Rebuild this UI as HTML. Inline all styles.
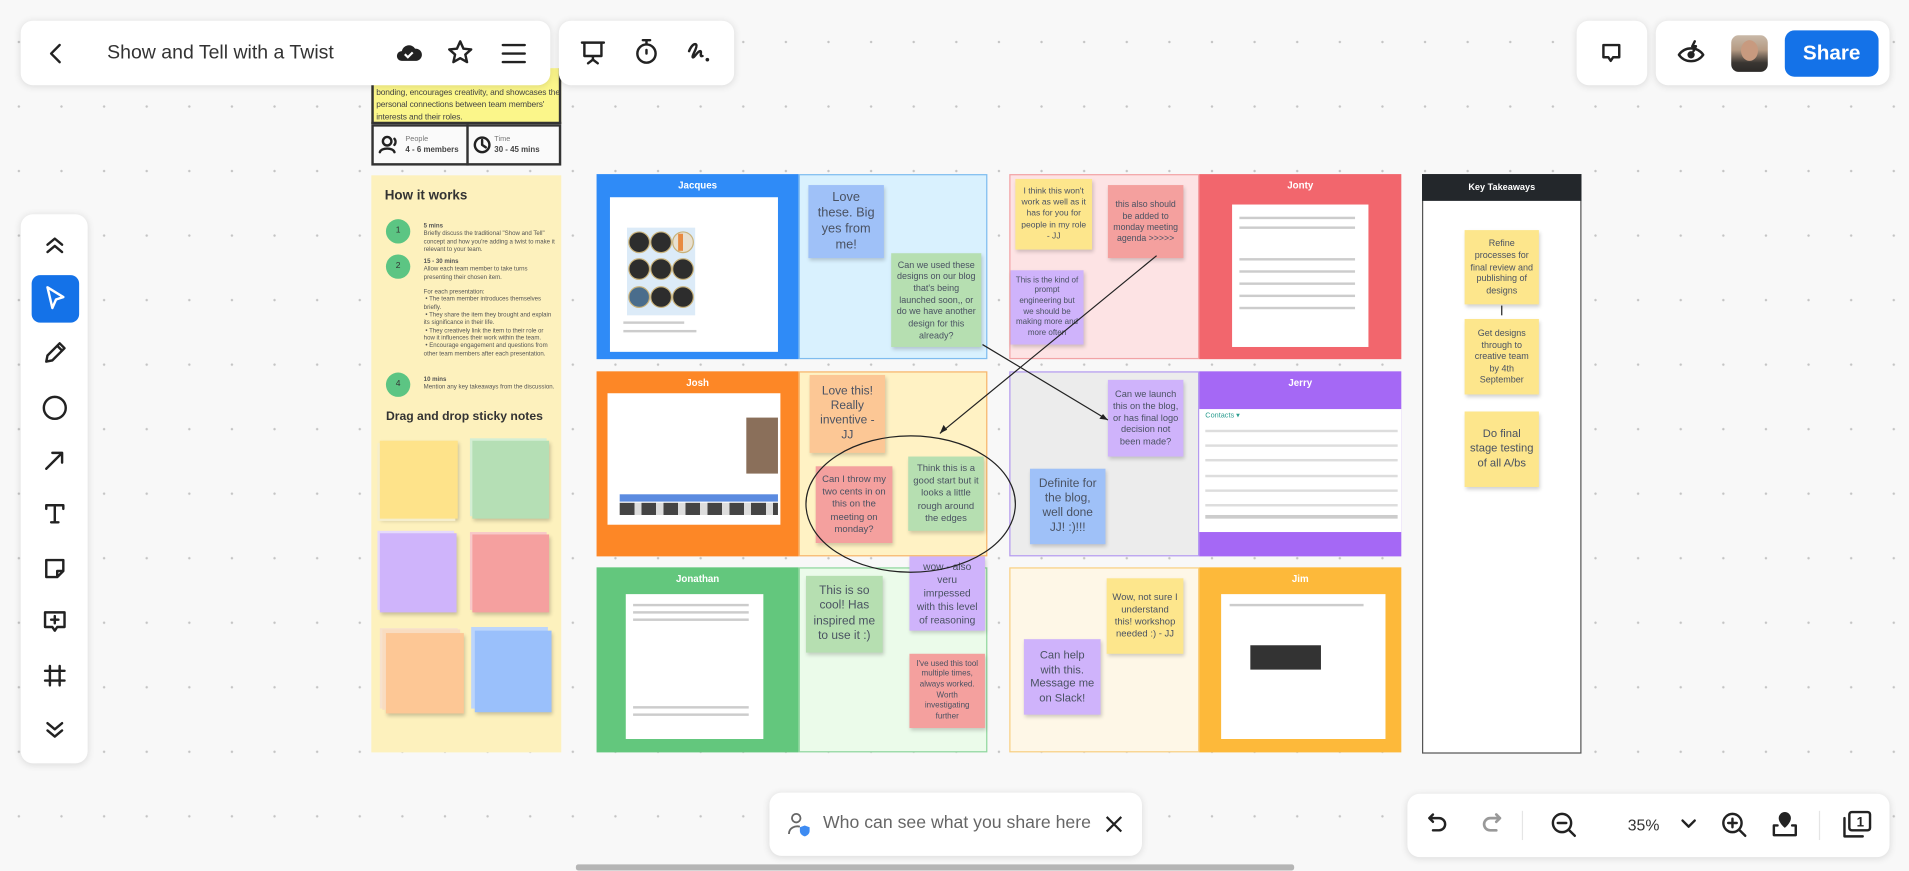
<!DOCTYPE html>
<html><head><meta charset="utf-8">
<style>
*{box-sizing:border-box;margin:0;padding:0}
html,body{width:1909px;height:871px;overflow:hidden;background:#f8f8f8;font-family:"Liberation Sans","DejaVu Sans",sans-serif}
#w{position:absolute;left:0;top:0;width:1568px;height:715px;transform:scale(1.21747);transform-origin:0 0;
background-color:#f8f8f8;background-image:radial-gradient(circle,#c4c4c4 0.8px,transparent 1.2px);background-size:35px 53px;background-position:-2px 8px}
.a{position:absolute}
.card{position:absolute;background:#fff;border-radius:10px;box-shadow:0 1px 6px rgba(0,0,0,.12)}
.st{position:absolute;display:flex;align-items:center;justify-content:center;text-align:center;color:#4a5262;font-size:7.4px;line-height:1.3;padding:4px;box-shadow:1px 2px 3px rgba(0,0,0,.18);font-family:"Liberation Sans",sans-serif}
.big{font-size:10.5px;line-height:1.25}
.y{background:#fde68c}.g{background:#b6dfb1}.b{background:#9fc1f8}.p{background:#cfb3fb}.r{background:#f4a09e}.o{background:#fcc795}
.hd{position:absolute;color:#fff;font-weight:bold;font-size:8px;text-align:center;width:100%;top:5px}
.ss{position:absolute;background:#fff}
.ln{position:absolute;height:1.5px;background:#ccc}
svg{position:absolute;overflow:visible}
.ic{fill:none;stroke:#222;stroke-width:2;stroke-linecap:round;stroke-linejoin:round}
</style></head><body><div id="w">

<!-- template column -->
<div class="a" style="left:305px;top:56px;width:156px;height:46px;background:#fbf68a;border:2px solid #333;border-top:none"></div>
<div class="a" style="left:309px;top:72px;width:152px;font-size:6.9px;line-height:10px;color:#444;letter-spacing:-0.1px">bonding, encourages creativity, and showcases the personal connections between team members' interests and their roles.</div>
<div class="a" style="left:305px;top:102px;width:156px;height:34px;background:#fafafa;border:2px solid #333"></div>
<div class="a" style="left:383px;top:102px;width:2px;height:34px;background:#333"></div>
<svg style="left:311px;top:111px" width="16" height="16"><circle cx="7" cy="5" r="3.5" class="ic" stroke-width="1.4"/><path d="M1 14c1-4 11-4 12 0M13 3a4 4 0 0 1 0 5" class="ic" stroke-width="1.4"/></svg>
<div class="a" style="left:333px;top:112px;font-size:6px;color:#777">People</div>
<div class="a" style="left:333px;top:120px;font-size:6.5px;color:#444;font-weight:bold">4 - 6 members</div>
<svg style="left:389px;top:112px" width="14" height="14"><circle cx="7" cy="7" r="6" class="ic" stroke-width="1.4"/><path d="M7 3v4l3 2" class="ic" stroke-width="1.4"/></svg>
<div class="a" style="left:406px;top:112px;font-size:6px;color:#777">Time</div>
<div class="a" style="left:406px;top:120px;font-size:6.5px;color:#444;font-weight:bold">30 - 45 mins</div>

<div class="a" style="left:305px;top:144px;width:156px;height:474px;background:#fdf1bd"></div>
<div class="a" style="left:316px;top:155px;font-size:11px;font-weight:bold;color:#333">How it works</div>
<div class="a" style="left:317px;top:180px;width:20px;height:20px;border-radius:50%;background:#5cc583;color:#333;font-size:7px;text-align:center;line-height:20px">1</div>
<div class="a" style="left:317px;top:209px;width:20px;height:20px;border-radius:50%;background:#5cc583;color:#333;font-size:7px;text-align:center;line-height:20px">2</div>
<div class="a" style="left:317px;top:306px;width:20px;height:20px;border-radius:50%;background:#5cc583;color:#333;font-size:7px;text-align:center;line-height:20px">4</div>
<div class="a" style="left:348px;top:183px;width:108px;font-size:5px;line-height:6.3px;color:#555"><b>5 mins</b><br>Briefly discuss the traditional "Show and Tell" concept and how you're adding a twist to make it relevant to your team.</div>
<div class="a" style="left:348px;top:212px;width:108px;font-size:5px;line-height:6.3px;color:#555"><b>15 - 30 mins</b><br>Allow each team member to take turns presenting their chosen item.<br><br>For each presentation:<br>&nbsp;• The team member introduces themselves briefly.<br>&nbsp;• They share the item they brought and explain its significance in their life.<br>&nbsp;• They creatively link the item to their role or how it influences their work within the team.<br>&nbsp;• Encourage engagement and questions from other team members after each presentation.</div>
<div class="a" style="left:348px;top:309px;width:108px;font-size:5px;line-height:6.3px;color:#555"><b>10 mins</b><br>Mention any key takeaways from the discussion.</div>
<div class="a" style="left:317px;top:337px;width:130px;font-size:10px;line-height:12px;font-weight:bold;color:#333">Drag and drop sticky notes</div>
<div class="a" style="left:312px;top:362px;width:64px;height:64px;background:#fee38a;box-shadow:-2px 2px 0 #f5eecc,1px 2px 3px rgba(0,0,0,.2)"></div>
<div class="a" style="left:388px;top:362px;width:63px;height:64px;background:#b5dfb5;box-shadow:-2px -2px 0 #d4eed4,1px 2px 3px rgba(0,0,0,.2)"></div>
<div class="a" style="left:312px;top:438px;width:63px;height:65px;background:#cfb4fb;box-shadow:-2px -2px 0 #e6dafc,1px 2px 3px rgba(0,0,0,.2)"></div>
<div class="a" style="left:388px;top:439px;width:63px;height:64px;background:#f5a09f;box-shadow:-2px -2px 0 #f8c9c8,1px 2px 3px rgba(0,0,0,.2)"></div>
<div class="a" style="left:317px;top:520px;width:64px;height:66px;background:#fdc795;box-shadow:-3px -3px 0 #f9dcc0,-5px -4px 0 #f7e1cc,1px 2px 3px rgba(0,0,0,.2)"></div>
<div class="a" style="left:390px;top:518px;width:63px;height:67px;background:#9ac0fb;box-shadow:-3px -3px 0 #bcd5fb,1px 2px 3px rgba(0,0,0,.2)"></div>

<!-- left grid -->
<div class="a" style="left:490px;top:143px;width:166px;height:152px;background:#2f8bf7"><div class="hd">Jacques</div></div>
<div class="a" style="left:656px;top:143px;width:155px;height:152px;background:#d9f1fe;border:1px solid #7fbcef"></div>
<div class="a" style="left:490px;top:305px;width:166px;height:152px;background:#fd8726"><div class="hd">Josh</div></div>
<div class="a" style="left:656px;top:305px;width:155px;height:152px;background:#fff2c4;border:1px solid #f6b56c"></div>
<div class="a" style="left:490px;top:466px;width:166px;height:152px;background:#63c77d"><div class="hd">Jonathan</div></div>
<div class="a" style="left:656px;top:466px;width:155px;height:152px;background:#ebfbea;border:1px solid #8ed69d"></div>
<!-- right grid -->
<div class="a" style="left:829px;top:143px;width:156px;height:152px;background:#fde3e4;border:1px solid #f2a3a6"></div>
<div class="a" style="left:985px;top:143px;width:166px;height:152px;background:#f2666d"><div class="hd">Jonty</div></div>
<div class="a" style="left:829px;top:305px;width:156px;height:152px;background:#ececec;border:1px solid #b49af0"></div>
<div class="a" style="left:985px;top:305px;width:166px;height:152px;background:#a568f5"><div class="hd">Jerry</div></div>
<div class="a" style="left:829px;top:466px;width:156px;height:152px;background:#fef7e7;border:1px solid #f8cf82"></div>
<div class="a" style="left:985px;top:466px;width:166px;height:152px;background:#fdb93a"><div class="hd">Jim</div></div>

<!-- screenshots -->
<div class="ss" style="left:501px;top:162px;width:138px;height:127px"></div>
<div class="a" style="left:515px;top:187px;width:56px;height:72px;background:#dcebf8"></div>
<svg style="left:516px;top:188px" width="54" height="70">
<g fill="#2d2d2d" stroke="#c9b27a" stroke-width="1"><circle cx="9" cy="11" r="8.5"/><circle cx="27" cy="11" r="8.5"/><circle cx="45" cy="11" r="8.5" fill="#e8e0d0"/><circle cx="9" cy="33" r="8.5"/><circle cx="27" cy="33" r="8.5"/><circle cx="45" cy="33" r="8.5"/><circle cx="9" cy="56" r="8.5" fill="#4a6d8c"/><circle cx="27" cy="56" r="8.5"/><circle cx="45" cy="56" r="8.5"/></g>
<rect x="41" y="4" width="4" height="14" fill="#e88a40"/></svg>
<div class="ln" style="left:512px;top:264px;width:50px"></div><div class="ln" style="left:512px;top:271px;width:60px"></div>
<div class="ss" style="left:499px;top:323px;width:142px;height:108px"></div>
<div class="a" style="left:613px;top:343px;width:26px;height:46px;background:#8a6f5a"></div>
<div class="a" style="left:509px;top:406px;width:130px;height:6px;background:#5b8be0"></div>
<div class="a" style="left:509px;top:413px;width:130px;height:10px;background:repeating-linear-gradient(90deg,#444 0 12px,#ddd 12px 18px)"></div>
<div class="ss" style="left:514px;top:488px;width:113px;height:119px"></div>
<div class="ln" style="left:520px;top:496px;width:95px"></div><div class="ln" style="left:520px;top:502px;width:95px"></div><div class="ln" style="left:520px;top:508px;width:95px"></div><div class="ln" style="left:520px;top:580px;width:95px"></div><div class="ln" style="left:520px;top:586px;width:95px"></div>
<div class="ss" style="left:1012px;top:168px;width:112px;height:117px"></div>
<div class="ln" style="left:1018px;top:178px;width:95px"></div><div class="ln" style="left:1018px;top:186px;width:95px"></div><div class="ln" style="left:1018px;top:212px;width:95px"></div><div class="ln" style="left:1018px;top:222px;width:95px"></div><div class="ln" style="left:1018px;top:232px;width:95px"></div><div class="ln" style="left:1018px;top:242px;width:95px"></div><div class="ln" style="left:1018px;top:252px;width:95px"></div>
<div class="ss" style="left:985px;top:336px;width:166px;height:101px"></div>
<div class="a" style="left:990px;top:338px;font-size:6px;color:#2a9d8f">Contacts ▾</div>
<div class="ln" style="left:990px;top:353px;width:158px;background:#ddd"></div><div class="ln" style="left:990px;top:365px;width:158px;background:#ddd"></div><div class="ln" style="left:990px;top:377px;width:158px;background:#ddd"></div><div class="ln" style="left:990px;top:390px;width:158px;background:#ddd"></div><div class="ln" style="left:990px;top:402px;width:158px;background:#ddd"></div><div class="ln" style="left:990px;top:414px;width:158px;background:#ddd"></div><div class="a" style="left:990px;top:423px;width:158px;height:3px;background:#ccc"></div>
<div class="ss" style="left:1003px;top:488px;width:135px;height:119px"></div>
<div class="a" style="left:1027px;top:530px;width:58px;height:20px;background:#333"></div>
<div class="ln" style="left:1010px;top:496px;width:110px"></div>

<!-- stickies -->
<div class="st b big" style="left:664px;top:152px;width:62px;height:60px">Love these. Big yes from me!</div>
<div class="st g" style="left:732px;top:208px;width:74px;height:77px">Can we used these designs on our blog that's being launched soon,, or do we have another design for this already?</div>
<div class="st y" style="left:834px;top:147px;width:63px;height:58px;font-size:7px">I think this won't work as well as it has for you for people in my role - JJ</div>
<div class="st r" style="left:910px;top:152px;width:62px;height:60px;font-size:7.2px">this also should be added to monday meeting agenda &gt;&gt;&gt;&gt;&gt;</div>
<div class="st p" style="left:830px;top:222px;width:60px;height:61px;font-size:6.6px">This is the kind of prompt engineering but we should be making more and more often</div>
<div class="st o big" style="left:665px;top:308px;width:62px;height:64px;font-size:9.8px">Love this! Really inventive - JJ</div>
<div class="st r" style="left:670px;top:383px;width:63px;height:63px;font-size:7.8px">Can I throw my two cents in on this on the meeting on monday?</div>
<div class="st g" style="left:746px;top:375px;width:62px;height:61px;font-size:7.8px">Think this is a good start but it looks a little rough around the edges</div>
<div class="st p" style="left:910px;top:312px;width:62px;height:63px;font-size:7.6px">Can we launch this on the blog, or has final logo decision not been made?</div>
<div class="st b big" style="left:846px;top:385px;width:62px;height:62px;font-size:9.8px">Definite for the blog, well done JJ! :)!!!</div>
<div class="st g big" style="left:662px;top:473px;width:63px;height:63px;font-size:9.8px">This is so cool! Has inspired me to use it :)</div>
<div class="st p" style="left:747px;top:457px;width:62px;height:61px;font-size:8.4px">wow - also veru imrpessed with this level of reasoning</div>
<div class="st r" style="left:747px;top:537px;width:62px;height:61px;font-size:6.6px">I've used this tool multiple times, always worked. Worth investigating further</div>
<div class="st y" style="left:909px;top:475px;width:63px;height:62px;font-size:7.8px">Wow, not sure I understand this! workshop needed :) - JJ</div>
<div class="st p big" style="left:841px;top:525px;width:63px;height:62px;font-size:9.2px">Can help with this. Message me on Slack!</div>

<!-- ellipse & arrows -->
<svg style="left:0;top:0" width="1568" height="715">
<ellipse cx="748" cy="414" rx="86" ry="56" fill="none" stroke="#222" stroke-width="1"/>
<path d="M950 210 L772 356" stroke="#222" stroke-width="1" fill="none"/><path d="M772 356l3-7 3 4z" fill="#222"/>
<path d="M807 283 L910 345" stroke="#222" stroke-width="1" fill="none"/><path d="M910 345l-7-1 3-4z" fill="#222"/>
</svg>

<!-- key takeaways -->
<div class="a" style="left:1168px;top:143px;width:131px;height:476px;background:#fff;border:1.5px solid #555"></div>
<div class="a" style="left:1168px;top:143px;width:131px;height:22px;background:#23272b;color:#fff;font-size:7.5px;font-weight:bold;text-align:center;line-height:22px">Key Takeaways</div>
<div class="st y" style="left:1203px;top:189px;width:61px;height:61px;font-size:7.4px">Refine processes for final review and publishing of designs</div>
<div class="a" style="left:1233px;top:251px;width:1px;height:8px;background:#222"></div>
<div class="st y" style="left:1203px;top:262px;width:61px;height:62px;font-size:7.4px">Get designs through to creative team by 4th September</div>
<div class="st y" style="left:1203px;top:338px;width:61px;height:62px;font-size:9.2px">Do final stage testing of all A/bs</div>

<!-- top left bar -->
<div class="card" style="left:17px;top:17px;width:435px;height:53px"></div>
<svg style="left:38px;top:35px" width="16" height="18"><path d="M11 2L4 9l7 7" class="ic"/></svg>
<div class="a" style="left:88px;top:35px;font-size:16px;color:#333">Show and Tell with a Twist</div>
<svg style="left:325px;top:33px" width="22" height="20"><path d="M5 17a4 4 0 0 1 0-8 6 6 0 0 1 11-2 4.5 4.5 0 0 1 1 10z" fill="#222"/><path d="M7.5 11.5l2.5 2.5 4-4" stroke="#fff" stroke-width="1.8" fill="none"/></svg>
<svg style="left:367px;top:32px" width="22" height="22"><path d="M11 2l2.7 6 6.3.6-4.8 4.2 1.4 6.2L11 15.8 5.4 19l1.4-6.2L2 8.6 8.3 8z" class="ic"/></svg>
<svg style="left:411px;top:34px" width="22" height="20"><path d="M2 3h18M2 10h18M2 17h18" class="ic" stroke-width="2.2"/></svg>
<div class="card" style="left:459px;top:17px;width:144px;height:53px"></div>
<svg style="left:476px;top:32px" width="22" height="22"><path d="M2 3h18M4 3v11h14V3M11 14v3M7 20l4-3 4 3" class="ic"/></svg>
<svg style="left:520px;top:31px" width="22" height="24"><circle cx="11" cy="13" r="7.5" class="ic"/><path d="M8 2h6M11 2v3M11 10v3" class="ic"/></svg>
<svg style="left:563px;top:32px" width="22" height="22"><path d="M3 10c2-5 5-7 6-5s-4 9-3 10 4-5 6-5-1 5 2 4" class="ic"/><circle cx="18" cy="17" r="1.5" fill="#222"/></svg>

<!-- top right -->
<div class="card" style="left:1295px;top:17px;width:58px;height:53px"></div>
<svg style="left:1314px;top:34px" width="20" height="20"><path d="M3 3h13v10h-5l-2 3-2-3H3z" class="ic" stroke-width="2.2"/></svg>
<div class="card" style="left:1360px;top:17px;width:192px;height:53px"></div>
<svg style="left:1377px;top:32px" width="26" height="22"><path d="M2 13c5-7 15-7 20 0-5 7-15 7-20 0z" class="ic"/><circle cx="12" cy="13" r="3" fill="#222"/><path d="M15 2l-2 4h3l-2 4" class="ic" stroke-width="1.5"/></svg>
<div class="a" style="left:1422px;top:29px;width:30px;height:30px;border-radius:6px;background:linear-gradient(#c9b9a8 0,#b59a83 40%,#3a3632 75%,#2c2a28 100%)"></div>
<div class="a" style="left:1430px;top:33px;width:14px;height:17px;border-radius:50%;background:#c89a7f"></div>
<div class="a" style="left:1466px;top:25px;width:77px;height:38px;border-radius:8px;background:#1472e8;color:#fff;font-size:17px;font-weight:bold;text-align:center;line-height:38px">Share</div>

<!-- left toolbar -->
<div class="card" style="left:17px;top:176px;width:55px;height:451px"></div>
<svg style="left:36px;top:192px" width="18" height="18"><path d="M3 9l6-5 6 5M3 15l6-5 6 5" class="ic"/></svg>
<div class="a" style="left:26px;top:226px;width:39px;height:39px;border-radius:7px;background:#1472e8"></div>
<svg style="left:35px;top:234px" width="22" height="22"><path d="M4 2l13 8-6 2-3 7z" fill="none" stroke="#fff" stroke-width="2" stroke-linejoin="round"/></svg>
<svg style="left:35px;top:280px" width="20" height="20"><path d="M3 17l1-5L14 2l4 4L8 16z M12 4l4 4" class="ic"/></svg>
<svg style="left:34px;top:324px" width="22" height="22"><circle cx="11" cy="11" r="9" class="ic"/></svg>
<svg style="left:35px;top:368px" width="20" height="20"><path d="M3 17L16 4M8 4h8v8" class="ic"/></svg>
<svg style="left:35px;top:412px" width="20" height="20"><path d="M3 3h14M3 3v3M17 3v3M10 3v14M7 17h6" class="ic" stroke-width="2.4"/></svg>
<svg style="left:35px;top:457px" width="20" height="20"><path d="M3 3h14v9l-5 5H3z M12 17v-5h5" class="ic"/></svg>
<svg style="left:34px;top:500px" width="22" height="22"><path d="M3 3h16v12h-6l-2 3-2-3H3z M11 6v6M8 9h6" class="ic"/></svg>
<svg style="left:35px;top:545px" width="20" height="20"><path d="M6 2v16M14 2v16M2 6h16M2 14h16" class="ic" stroke-width="2.2"/></svg>
<svg style="left:36px;top:591px" width="18" height="18"><path d="M3 3l6 5 6-5M3 9l6 5 6-5" class="ic"/></svg>

<!-- bottom share notice -->
<div class="card" style="left:632px;top:651px;width:306px;height:52px"></div>
<svg style="left:645px;top:666px" width="24" height="24"><circle cx="9" cy="6" r="3.5" fill="none" stroke="#666" stroke-width="1.5"/><path d="M3 19c0-5 5-7 9-6" fill="none" stroke="#666" stroke-width="1.5"/><path d="M16 12l4 1.5v3c0 2.5-2 4-4 4.5-2-.5-4-2-4-4.5v-3z" fill="#3d8bf2"/></svg>
<div class="a" style="left:676px;top:668px;font-size:14.5px;color:#666">Who can see what you share here</div>
<svg style="left:907px;top:669px" width="16" height="16"><path d="M2 2l12 12M14 2L2 14" stroke="#222" stroke-width="1.8"/></svg>

<!-- zoom bar -->
<div class="card" style="left:1156px;top:652px;width:396px;height:52px"></div>
<svg style="left:1171px;top:666px" width="22" height="22"><path d="M6 3L3 6l3 3M3 6h8a5 5 0 0 1 0 10H6" class="ic" stroke-width="2.2"/></svg>
<svg style="left:1213px;top:666px" width="22" height="22"><path d="M16 3l3 3-3 3M19 6h-8a5 5 0 0 0 0 10h5" fill="none" stroke="#999" stroke-width="2.2" stroke-linecap="round" stroke-linejoin="round"/></svg>
<div class="a" style="left:1250px;top:666px;width:1px;height:24px;background:#e5e5e5"></div>
<svg style="left:1273px;top:666px" width="24" height="24"><circle cx="10" cy="10" r="7.5" class="ic" stroke-width="2.2"/><path d="M6.5 10h7M15.5 15.5l5 5" class="ic" stroke-width="2.2"/></svg>
<div class="a" style="left:1337px;top:670px;font-size:13px;color:#333">35%</div>
<svg style="left:1380px;top:672px" width="14" height="10"><path d="M2 2l5 5 5-5" class="ic" stroke-width="2.2"/></svg>
<svg style="left:1413px;top:666px" width="24" height="24"><circle cx="10" cy="10" r="7.5" class="ic" stroke-width="2.2"/><path d="M6.5 10h7M10 6.5v7M15.5 15.5l5 5" class="ic" stroke-width="2.2"/></svg>
<svg style="left:1454px;top:665px" width="24" height="24"><path d="M12 2a5 5 0 0 0-5 5c0 4 5 8 5 8s5-4 5-8a5 5 0 0 0-5-5z" fill="#222"/><path d="M6 13H3v8h18v-8h-3" class="ic"/></svg>
<div class="a" style="left:1494px;top:666px;width:1px;height:24px;background:#e5e5e5"></div>
<svg style="left:1511px;top:664px" width="28" height="28"><path d="M4 8v15h15" class="ic" stroke-width="2.2"/><rect x="8" y="3" width="17" height="15" rx="2" class="ic" stroke-width="2.2"/><text x="14" y="15" font-size="11" font-weight="bold" fill="#222" font-family="Liberation Sans">1</text></svg>

<!-- scrollbar -->
<div class="a" style="left:473px;top:710px;width:590px;height:5px;background:#b5b5b5;border-radius:2px"></div>
</div></body></html>
